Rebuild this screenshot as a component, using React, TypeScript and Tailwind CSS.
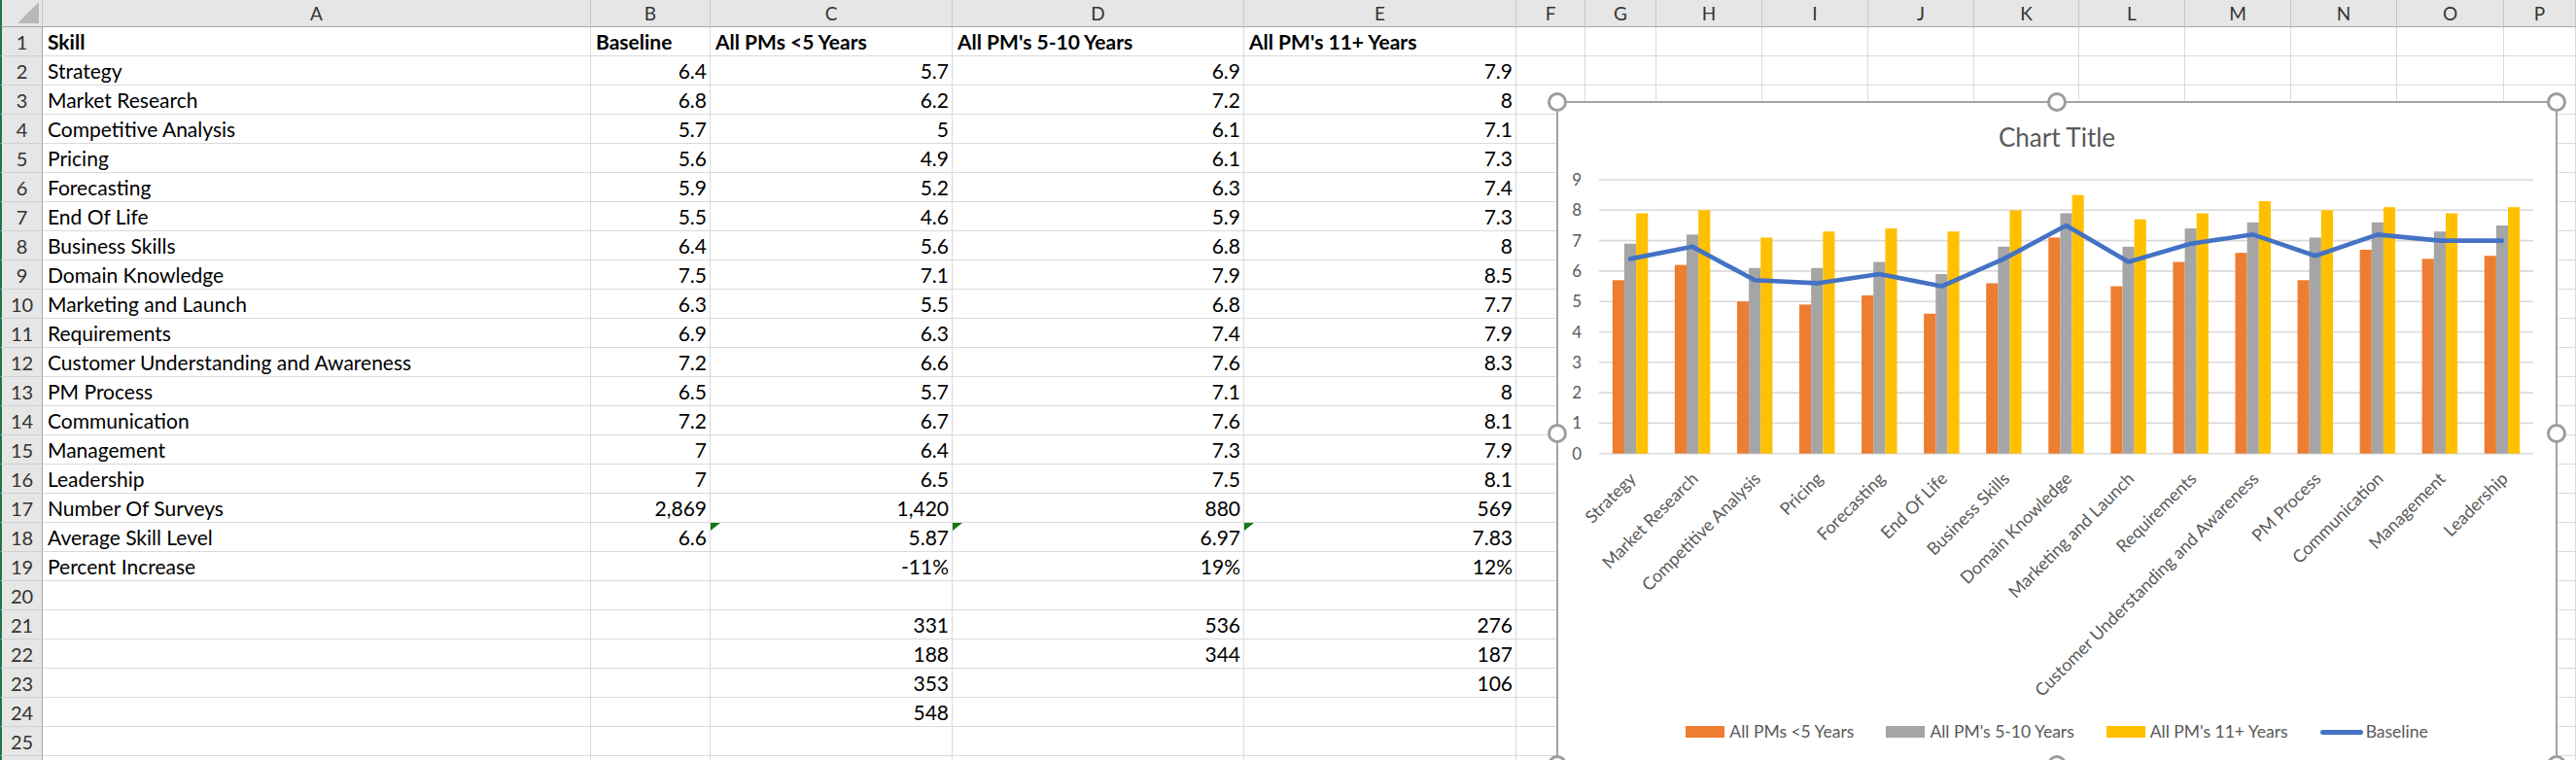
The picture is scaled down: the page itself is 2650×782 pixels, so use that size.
import React from 'react';
import clsx from 'clsx';

const letters = ['A', 'B', 'C', 'D', 'E', 'F', 'G', 'H', 'I', 'J', 'K', 'L', 'M', 'N', 'O', 'P'];

const sheet: (string | null)[][] = [
  ['Skill', 'Baseline', 'All PMs <5 Years', "All PM's 5-10 Years", "All PM's 11+ Years"],
  ['Strategy', '6.4', '5.7', '6.9', '7.9'],
  ['Market Research', '6.8', '6.2', '7.2', '8'],
  ['Competitive Analysis', '5.7', '5', '6.1', '7.1'],
  ['Pricing', '5.6', '4.9', '6.1', '7.3'],
  ['Forecasting', '5.9', '5.2', '6.3', '7.4'],
  ['End Of Life', '5.5', '4.6', '5.9', '7.3'],
  ['Business Skills', '6.4', '5.6', '6.8', '8'],
  ['Domain Knowledge', '7.5', '7.1', '7.9', '8.5'],
  ['Marketing and Launch', '6.3', '5.5', '6.8', '7.7'],
  ['Requirements', '6.9', '6.3', '7.4', '7.9'],
  ['Customer Understanding and Awareness', '7.2', '6.6', '7.6', '8.3'],
  ['PM Process', '6.5', '5.7', '7.1', '8'],
  ['Communication', '7.2', '6.7', '7.6', '8.1'],
  ['Management', '7', '6.4', '7.3', '7.9'],
  ['Leadership', '7', '6.5', '7.5', '8.1'],
  ['Number Of Surveys', '2,869', '1,420', '880', '569'],
  ['Average Skill Level', '6.6', '5.87', '6.97', '7.83'],
  ['Percent Increase', null, '-11%', '19%', '12%'],
  [null, null, null, null, null],
  [null, null, '331', '536', '276'],
  [null, null, '188', '344', '187'],
  [null, null, '353', null, '106'],
  [null, null, '548', null, null],
  [null, null, null, null, null],
  [null, null, null, null, null],
];

const skills = sheet.slice(1, 16).map((r) => r[0] as string);
const baseline = [6.4, 6.8, 5.7, 5.6, 5.9, 5.5, 6.4, 7.5, 6.3, 6.9, 7.2, 6.5, 7.2, 7, 7];
const under5 = [5.7, 6.2, 5, 4.9, 5.2, 4.6, 5.6, 7.1, 5.5, 6.3, 6.6, 5.7, 6.7, 6.4, 6.5];
const mid = [6.9, 7.2, 6.1, 6.1, 6.3, 5.9, 6.8, 7.9, 6.8, 7.4, 7.6, 7.1, 7.6, 7.3, 7.5];
const senior = [7.9, 8, 7.1, 7.3, 7.4, 7.3, 8, 8.5, 7.7, 7.9, 8.3, 8, 8.1, 7.9, 8.1];

function Cell({ value, right, bold, flag }: { value: string | null; right?: boolean; bold?: boolean; flag?: boolean }) {
  return (
    <div
      className={clsx(
        'relative h-[30px] whitespace-nowrap border-b border-r border-[#dadada] text-[21px] leading-[30px] text-black',
        right ? 'pr-[3px] text-right' : 'pl-[5px]',
        bold && 'font-bold',
      )}
    >
      {flag && (
        <span className="absolute left-0 top-0 h-0 w-0 border-r-[10px] border-t-[8px] border-r-transparent border-t-[#127a12]" />
      )}
      {value}
    </div>
  );
}

function Handle({ className }: { className: string }) {
  return <div className={clsx('absolute h-5 w-5 rounded-full border-[3px] border-[#9d9d9d] bg-white', className)} />;
}

function Chart() {
  const x0 = 1645;
  const step = 961 / 15;
  const y0 = 466.7;
  const unit = 31.3;
  const Y = (v: number) => y0 - v * unit;
  const cx = (i: number) => x0 + step * (i + 0.5);
  const bw = 12.15;

  return (
    <div className="absolute left-[1601px] top-[104px] h-[684px] w-[1030px] border-2 border-[#a3a3a3] bg-white">
      <div className="h-[52px] pt-[18px] text-center text-[26px] leading-[34px] text-[#595959]">Chart Title</div>

      <svg width="1026" height="583" viewBox="1603 158 1026 583" className="block">
        {Array.from({ length: 10 }, (_, k) => (
          <g key={k}>
            <line x1={x0} x2={2606} y1={Y(k)} y2={Y(k)} stroke="#d9d9d9" strokeWidth={1.6} />
            <text x={1627} y={Y(k) + 6} textAnchor="end" fontSize={17} fill="#595959" fontFamily="Lato, sans-serif">
              {k}
            </text>
          </g>
        ))}
        {skills.map((s, i) => (
          <g key={s}>
            <rect x={cx(i) - bw * 1.5} y={Y(under5[i])} width={bw} height={under5[i] * unit} fill="#ed7d31" />
            <rect x={cx(i) - bw * 0.5} y={Y(mid[i])} width={bw} height={mid[i] * unit} fill="#a5a5a5" />
            <rect x={cx(i) + bw * 0.5} y={Y(senior[i])} width={bw} height={senior[i] * unit} fill="#ffc000" />
            <text
              x={cx(i) + 7}
              y={y0 + 27}
              textAnchor="end"
              fontSize={17.8}
              fill="#595959"
              fontFamily="Lato, sans-serif"
              transform={`rotate(-45 ${cx(i) + 7} ${y0 + 27})`}
            >
              {s}
            </text>
          </g>
        ))}
        <polyline
          points={baseline.map((v, i) => `${cx(i)},${Y(v)}`).join(' ')}
          fill="none"
          stroke="#4472c4"
          strokeWidth={4.6}
          strokeLinejoin="round"
          strokeLinecap="round"
        />
      </svg>

      <div className="flex h-[24px] items-center justify-center gap-[33px] text-[17.5px] leading-[24px] text-[#595959]">
        <div className="flex items-center gap-[5px]">
          <span className="h-[12px] w-[40px] bg-[#ed7d31]" />
          All PMs &lt;5 Years
        </div>
        <div className="flex items-center gap-[5px]">
          <span className="h-[12px] w-[40px] bg-[#a5a5a5]" />
          All PM's 5-10 Years
        </div>
        <div className="flex items-center gap-[5px]">
          <span className="h-[12px] w-[40px] bg-[#ffc000]" />
          All PM's 11+ Years
        </div>
        <div className="flex items-center gap-[3px]">
          <span className="h-[5px] w-[44px] rounded-full bg-[#4472c4]" />
          Baseline
        </div>
      </div>

      <Handle className="-left-[11px] -top-[11px]" />
      <Handle className="-top-[11px] left-1/2 -ml-[10px]" />
      <Handle className="-right-[11px] -top-[11px]" />
      <Handle className="-left-[11px] top-1/2 -mt-[10px]" />
      <Handle className="-right-[11px] top-1/2 -mt-[10px]" />
      <Handle className="-bottom-[11px] -left-[11px]" />
      <Handle className="-bottom-[11px] left-1/2 -ml-[10px]" />
      <Handle className="-bottom-[11px] -right-[11px]" />
    </div>
  );
}

export default function App() {
  return (
    <div className="relative h-[782px] w-[2650px] overflow-hidden bg-white font-['Lato',sans-serif]">
      <div className="grid grid-cols-[44px_564px_123px_249px_300px_280px_71px_73px_109px_109px_109px_108px_109px_109px_109px_110px_1fr]">
        {/* column headers */}
        <div className="relative h-[28px] border-b border-l-2 border-r border-b-[#a6a6a6] border-l-[#217346] border-r-[#c2c2c2] bg-[#e6e6e6]">
          <span className="absolute bottom-[3px] right-[3px] h-0 w-0 border-b-[22px] border-l-[22px] border-b-[#b8b8b8] border-l-transparent" />
        </div>
        {letters.map((l) => (
          <div
            key={l}
            className="h-[28px] border-b border-r border-b-[#a6a6a6] border-r-[#c8c8c8] bg-[#e6e6e6] text-center text-[19px] leading-[28px] text-[#333333]"
          >
            {l}
          </div>
        ))}

        {sheet.map((row, r) => (
          <React.Fragment key={r}>
            <div className="h-[30px] border-b border-l-2 border-r border-b-[#cfcfcf] border-l-[#217346] border-r-[#a6a6a6] bg-[#e6e6e6] text-center text-[20px] leading-[30px] text-[#333333]">
              {r + 1}
            </div>
            {row.map((v, c) => (
              <Cell key={c} value={v} right={r > 0 && c > 0} bold={r === 0} flag={r === 17 && c >= 2} />
            ))}
            {letters.slice(5).map((l) => (
              <Cell key={l} value={null} />
            ))}
          </React.Fragment>
        ))}
      </div>

      <Chart />
    </div>
  );
}
